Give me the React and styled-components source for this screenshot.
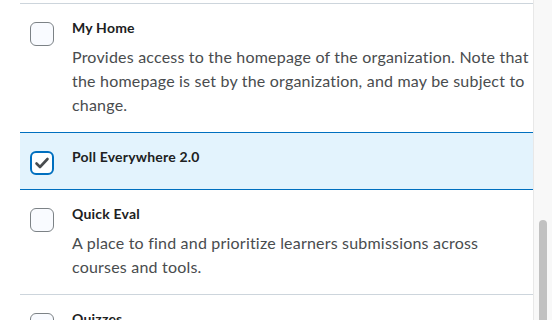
import React from "react";
import styled, { createGlobalStyle } from "styled-components";

const tools = [
  {
    id: "home",
    name: "My Home",
    description:
      "Provides access to the homepage of the organization. Note that the homepage is set by the organization, and may be subject to change.",
    selected: false,
  },
  { id: "poll", name: "Poll Everywhere 2.0", selected: true },
  {
    id: "eval",
    name: "Quick Eval",
    description:
      "A place to find and prioritize learners submissions across courses and tools.",
    selected: false,
  },
  { id: "quizzes", name: "Quizzes", selected: false },
];

export default function App() {
  return (
    <>
      <GlobalStyle />
      <Page>
        <ListArea>
          <List>
            {tools.map((tool, i) => {
              const prevSelected = i > 0 && tools[i - 1].selected;
              return (
                <Item
                  key={tool.id}
                  $selected={tool.selected}
                  $hidden={prevSelected}
                >
                  <Checkbox $checked={tool.selected}>
                    {tool.selected && (
                      <svg width="16" height="16" viewBox="0 0 16 16">
                        <path
                          d="M2.5 8.5 L6 12 L13.5 4"
                          fill="none"
                          stroke="#494c4e"
                          strokeWidth="2.6"
                          strokeLinecap="round"
                          strokeLinejoin="round"
                        />
                      </svg>
                    )}
                  </Checkbox>
                  <Content>
                    <Title>{tool.name}</Title>
                    {tool.description && (
                      <Description>{tool.description}</Description>
                    )}
                  </Content>
                </Item>
              );
            })}
          </List>
        </ListArea>
        <ScrollTrack>
          <ScrollThumb />
        </ScrollTrack>
      </Page>
    </>
  );
}

const GlobalStyle = createGlobalStyle`
  html, body {
    margin: 0;
    padding: 0;
    background: #ffffff;
    font-family: Lato, "Open Sans", sans-serif;
  }
`;
const Page = styled.div`
  display: flex;
  height: 100vh;
  overflow: hidden;
`;
const ListArea = styled.div`
  flex: 1;
  padding: 3px 0 0 20px;
  min-width: 0;
`;
const List = styled.div`
  display: flex;
  flex-direction: column;
`;
/* the row after a selected one shares its blue bottom border */
const Item = styled.div`
  display: flex;
  align-items: flex-start;
  gap: 18px;
  padding: 16px 2px 14px 10px;
  border-top: ${(p) =>
    p.$hidden
      ? "none"
      : `1px solid ${p.$selected ? "#006fbf" : "#cdd5dc"}`};
  border-bottom: ${(p) => (p.$selected ? "1px solid #006fbf" : "none")};
  background-color: ${(p) => (p.$selected ? "#e3f3fd" : "transparent")};
`;
const Checkbox = styled.div`
  flex: none;
  box-sizing: border-box;
  width: 24px;
  height: 24px;
  margin-top: 2px;
  border-radius: 6px;
  border: ${(p) => (p.$checked ? "2px solid #006fbf" : "1px solid #7c8286")};
  background-color: ${(p) => (p.$checked ? "#ffffff" : "#f9fbff")};
  display: flex;
  align-items: center;
  justify-content: center;
`;
const Content = styled.div`
  flex: 1;
  min-width: 0;
`;
const Title = styled.div`
  font-size: 14px;
  line-height: 16px;
  font-weight: 700;
  letter-spacing: 0.2px;
  color: #202122;
`;
const Description = styled.p`
  margin: 9px 0 1px;
  font-size: 16px;
  line-height: 24px;
  letter-spacing: 0.2px;
  color: #494c4e;
`;
const ScrollTrack = styled.div`
  flex: none;
  width: 18px;
  border-left: 1px solid #e8e8e8;
  background-color: #f8f8f8;
  padding-top: 220px;
  display: flex;
  justify-content: center;
`;
const ScrollThumb = styled.div`
  width: 8px;
  height: 200px;
  border-radius: 4px;
  background-color: #c1c1c1;
`;
